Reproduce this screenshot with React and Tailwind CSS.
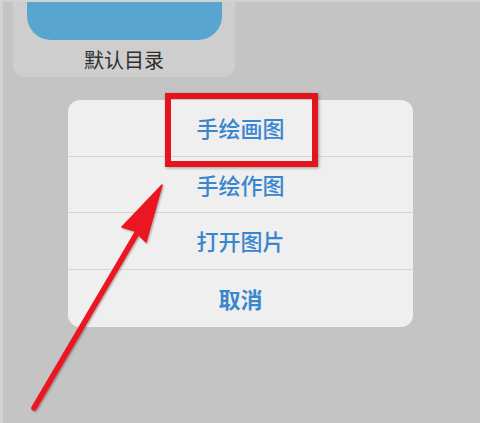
export default function App() {
  const items = ["手绘画图", "手绘作图", "打开图片"];
  return (
    <div
      className="relative w-[480px] h-[423px] overflow-hidden bg-[#c4c4c4] border-l-[3px] border-t-[2px] border-[#d2d2d2]"
      style={{ fontFamily: '"Noto Sans CJK SC", "Noto Sans", sans-serif' }}
    >
      {/* folder card */}
      <div className="ml-[10px] -mt-[2px] w-[222px] h-[77px] bg-[#cecece] rounded-b-[12px] flex flex-col items-center">
        <div className="w-[195px] h-[40px] bg-[#58a6cf] rounded-b-[24px]" />
        <div className="mt-[6px] text-[20px] leading-[28px] text-[#2f2f2f]">默认目录</div>
      </div>

      {/* action sheet */}
      <div className="ml-[65px] mt-[23px] w-[345px] bg-[#efefef] rounded-[12px] flex flex-col">
        {items.map((t) => (
          <div
            key={t}
            className="h-[56.5px] flex items-center justify-center border-b border-[#d6d6d6] text-[22px] font-medium text-[#3a86cd]"
          >
            {t}
          </div>
        ))}
        <div className="h-[57px] flex items-center justify-center text-[22px] font-bold text-[#3a86cd]">
          取消
        </div>
      </div>

      {/* red highlight box */}
      <div className="absolute left-[162px] top-[91px] w-[153px] h-[74px] border-[6px] border-[#e4141c] shadow-[1px_1px_3px_rgba(0,0,0,0.35)]" />

      {/* red arrow */}
      <svg
        className="absolute left-0 top-0"
        width="480"
        height="423"
        viewBox="0 0 480 423"
      >
        <defs>
          <filter id="sh" x="-20%" y="-20%" width="140%" height="140%">
            <feDropShadow dx="1" dy="1" stdDeviation="1" floodColor="#000" floodOpacity="0.35" />
          </filter>
        </defs>
        <g filter="url(#sh)" fill="#ea1520" stroke="#ea1520">
          <line x1="31" y1="406" x2="137" y2="226" strokeWidth="5.5" strokeLinecap="round" />
          <polygon points="159,183 119,225 132,229 143,240" strokeWidth="1.5" strokeLinejoin="round" />
        </g>
      </svg>
    </div>
  );
}
